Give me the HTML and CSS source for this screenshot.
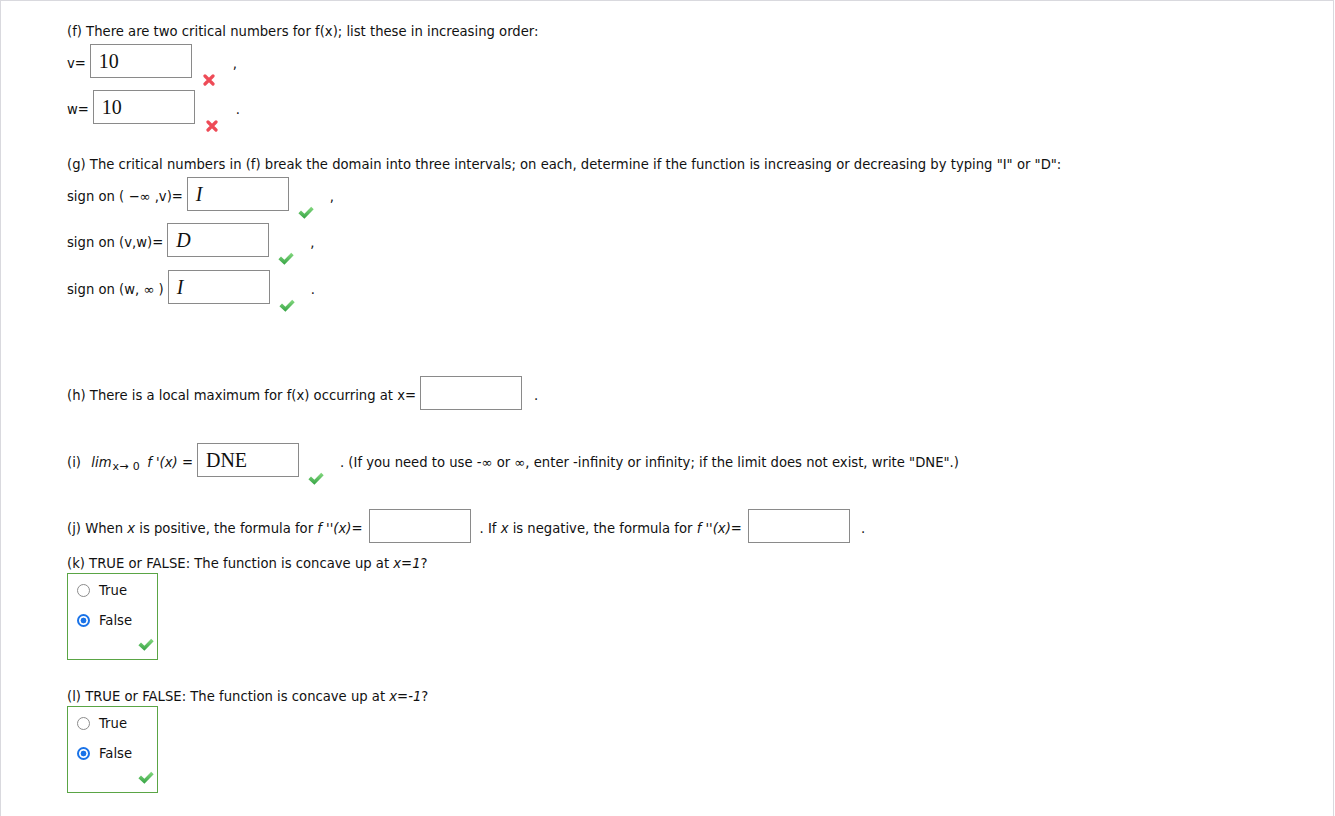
FILE: index.html
```html
<!DOCTYPE html>
<html>
<head>
<meta charset="utf-8">
<link rel="stylesheet" href="styles.css">
</head>
<body>
<div class="page">
  <p class="q q-f">(f) There are two critical numbers for f(x); list these in increasing order:</p>
  <div class="row r-v">
    <span class="lbl">v=</span><span class="box">10</span>
    <span class="slot"><svg class="ic-x" width="12" height="12" viewBox="0 0 12 12"><path d="M2 2 L10 10 M10 2 L2 10" stroke="#ee4b57" stroke-width="3.2" stroke-linecap="round"/></svg></span><span class="tail">,</span>
  </div>
  <div class="row r-w">
    <span class="lbl">w=</span><span class="box">10</span>
    <span class="slot"><svg class="ic-x" width="12" height="12" viewBox="0 0 12 12"><path d="M2 2 L10 10 M10 2 L2 10" stroke="#ee4b57" stroke-width="3.2" stroke-linecap="round"/></svg></span><span class="tail">.</span>
  </div>

  <p class="q q-g">(g) The critical numbers in (f) break the domain into three intervals; on each, determine if the function is increasing or decreasing by typing "I" or "D":</p>
  <div class="row r-g1">
    <span class="lbl">sign on ( −∞ ,v)=</span><span class="box it">I</span>
    <span class="slot"><svg class="ic-ok" width="16" height="13" viewBox="0 0 16 13"><defs><linearGradient id="g1" x1="0" y1="0" x2="0" y2="1"><stop offset="0" stop-color="#86d981"/><stop offset="1" stop-color="#34a343"/></linearGradient></defs><path d="M0.4 7.2 L3 4.6 L6.4 7.8 L13.2 0.8 L15.7 3.3 L6.4 12.7 Z" fill="url(#g1)"/></svg></span><span class="tail">,</span>
  </div>
  <div class="row r-g2">
    <span class="lbl">sign on (v,w)=</span><span class="box it">D</span>
    <span class="slot"><svg class="ic-ok" width="16" height="13" viewBox="0 0 16 13"><path d="M0.4 7.2 L3 4.6 L6.4 7.8 L13.2 0.8 L15.7 3.3 L6.4 12.7 Z" fill="url(#g1)"/></svg></span><span class="tail">,</span>
  </div>
  <div class="row r-g3">
    <span class="lbl">sign on (w, ∞ )</span><span class="box it">I</span>
    <span class="slot"><svg class="ic-ok" width="16" height="13" viewBox="0 0 16 13"><path d="M0.4 7.2 L3 4.6 L6.4 7.8 L13.2 0.8 L15.7 3.3 L6.4 12.7 Z" fill="url(#g1)"/></svg></span><span class="tail">.</span>
  </div>

  <div class="row r-h">
    <span class="lbl">(h) There is a local maximum for f(x) occurring at x=</span><span class="box">&nbsp;</span><span class="dot">.</span>
  </div>

  <div class="row r-i">
    <span class="lbl">(i) &nbsp;<em class="lim">lim</em><sub>x→ 0</sub> <em>f '(x)</em> =</span><span class="box">DNE</span>
    <span class="slot"><svg class="ic-ok" width="16" height="13" viewBox="0 0 16 13"><path d="M0.4 7.2 L3 4.6 L6.4 7.8 L13.2 0.8 L15.7 3.3 L6.4 12.7 Z" fill="url(#g1)"/></svg></span><span class="tail">. (If you need to use -∞ or ∞, enter -infinity or infinity; if the limit does not exist, write "DNE".)</span>
  </div>

  <div class="row r-j">
    <span class="lbl">(j) When <em>x</em> is positive, the formula for <em>f ''(x)</em>=</span><span class="box">&nbsp;</span><span class="mid">. If <em>x</em> is negative, the formula for <em>f ''(x)</em>=</span><span class="box">&nbsp;</span><span class="dot2">.</span>
  </div>

  <p class="q q-k">(k) TRUE or FALSE: The function is concave up at <em>x=1</em>?</p>
  <div class="choices">
    <div class="opt"><span class="radio"></span><span>True</span></div>
    <div class="opt"><span class="radio on"></span><span>False</span></div>
    <div class="okline"><svg class="ic-ok" width="16" height="13" viewBox="0 0 16 13"><path d="M0.4 7.2 L3 4.6 L6.4 7.8 L13.2 0.8 L15.7 3.3 L6.4 12.7 Z" fill="url(#g1)"/></svg></div>
  </div>

  <p class="q q-l">(l) TRUE or FALSE: The function is concave up at <em>x=-1</em>?</p>
  <div class="choices">
    <div class="opt"><span class="radio"></span><span>True</span></div>
    <div class="opt"><span class="radio on"></span><span>False</span></div>
    <div class="okline"><svg class="ic-ok" width="16" height="13" viewBox="0 0 16 13"><path d="M0.4 7.2 L3 4.6 L6.4 7.8 L13.2 0.8 L15.7 3.3 L6.4 12.7 Z" fill="url(#g1)"/></svg></div>
  </div>
</div>
</body>
</html>
```

FILE: styles.css
```css
html, body {
  margin: 0;
  padding: 0;
  background: #fff;
}
body {
  font-family: "DejaVu Sans", Verdana, sans-serif;
  font-size: 13.2px;
  color: #111;
}
.page {
  width: 1334px;
  min-height: 830px;
  box-sizing: border-box;
  border: 1px solid #d9d9de;
  padding: 0 0 0 66px;
}
.q {
  margin: 0;
  line-height: 16px;
  white-space: nowrap;
}
.q-f { padding-top: 23px; }
.row {
  display: flex;
  align-items: baseline;
  height: 34px;
  white-space: nowrap;
}
.lbl { line-height: 16px; }
em { font-style: italic; }
.lim { margin-left: 2px; }
sub {
  font-size: 11px;
  vertical-align: -3px;
  line-height: 0;
  margin-left: 1px;
  margin-right: 3px;
  letter-spacing: 0.3px;
}
.box {
  display: block;
  box-sizing: border-box;
  width: 102px;
  height: 34px;
  border: 1px solid #8a8a8a;
  padding-left: 8px;
  margin-left: 4px;
  line-height: 32px;
  font-family: "Liberation Serif", "Times New Roman", serif;
  font-size: 20px;
  color: #111;
}
.box.it { font-style: italic; }
.r-j .box { margin-left: 6px; }
.slot {
  align-self: flex-start;
  width: 32px;
  margin-left: 9px;
  height: 34px;
  display: flex;
  align-items: flex-start;
}
.ic-x { margin-top: 30px; margin-left: 2px; }
.ic-ok { margin-top: 29px; display: block; }
.tail { line-height: 16px; }
.dot { margin-left: 12px; }
.mid { margin-left: 9px; }
.dot2 { margin-left: 11px; }

.r-v { margin-top: 4px; }
.r-w { margin-top: 12px; }
.q-g { margin-top: 33px; }
.r-g1 { margin-top: 4px; }
.r-g2 { margin-top: 12px; }
.r-g3 { margin-top: 13px; }
.r-h { margin-top: 72px; }
.r-i { margin-top: 33px; }
.r-j { margin-top: 32px; }
.q-k { margin-top: 13px; }
.q-l { margin-top: 29px; }

.choices {
  margin-top: 1px;
  width: 91px;
  height: 87px;
  box-sizing: border-box;
  border: 1px solid #5aa545;
  padding: 1px 0 0 9px;
}
.opt {
  height: 30px;
  display: flex;
  align-items: center;
}
.radio {
  display: inline-block;
  width: 13px;
  height: 13px;
  box-sizing: border-box;
  border: 1px solid #8c8c8c;
  border-radius: 50%;
  background: #fff;
  margin-right: 9px;
}
.radio.on {
  border: 2px solid #1a73e8;
  background: radial-gradient(circle, #1a73e8 0, #1a73e8 2.6px, #fff 3.2px);
}
.okline {
  display: flex;
  justify-content: flex-end;
  padding-right: 3px;
  margin-top: 3px;
}
.okline .ic-ok { margin-top: 0; }
```
